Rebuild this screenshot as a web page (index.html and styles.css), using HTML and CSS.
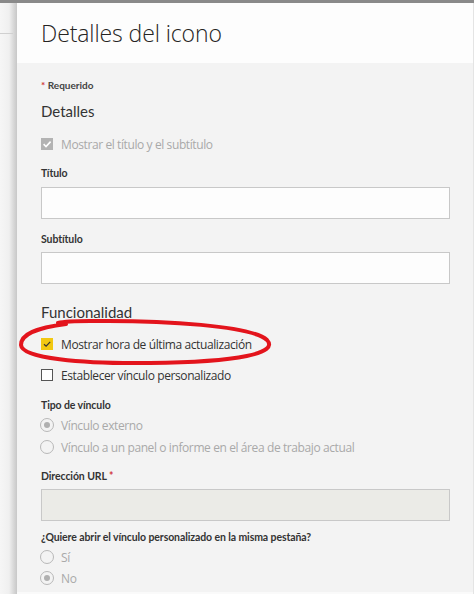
FILE: index.html
```html
<!DOCTYPE html>
<html lang="es">
<head>
<meta charset="utf-8">
<title>Detalles del icono</title>
<link rel="stylesheet" href="styles.css">
</head>
<body>
<div class="topbar"></div>
<div class="layout">
  <div class="backdrop"><div class="backdrop-line"></div></div>
  <main class="panel">
    <header class="panel-header">
      <h1 class="panel-title">Detalles del icono</h1>
    </header>
    <section class="panel-body">
      <div class="required"><span class="star">*</span> Requerido</div>
      <h2 class="section-title">Detalles</h2>
      <div class="check-row disabled m-13">
        <span class="box box-disabled"><svg viewBox="0 0 12 12" class="tick"><path d="M2.6 6.2 L5 8.5 L9.6 3.6" fill="none" stroke="#fff" stroke-width="1.6"/></svg></span>
        <span>Mostrar el título y el subtítulo</span>
      </div>
      <div class="field-label m-11">Título</div>
      <div class="input"></div>
      <div class="field-label m-12">Subtítulo</div>
      <div class="input m-5"></div>
      <h2 class="section-title m-18">Funcionalidad</h2>
      <div class="check-row m-12">
        <span class="box box-yellow"><svg viewBox="0 0 12 12" class="tick"><path d="M3 6.2 L5.1 8.2 L9.2 3.8" fill="none" stroke="#333" stroke-width="1.2"/></svg></span>
        <span>Mostrar hora de última actualización</span>
      </div>
      <div class="check-row m-11">
        <span class="box box-empty"></span>
        <span>Establecer vínculo personalizado</span>
      </div>
      <div class="field-label m-12">Tipo de vínculo</div>
      <div class="radio-row disabled m-2"><span class="radio checked"></span><span>Vínculo externo</span></div>
      <div class="radio-row disabled m-2"><span class="radio"></span><span>Vínculo a un panel o informe en el área de trabajo actual</span></div>
      <div class="field-label m-11">Dirección URL <span class="star">*</span></div>
      <div class="input input-disabled m-5"></div>
      <div class="field-label m-8">¿Quiere abrir el vínculo personalizado en la misma pestaña?</div>
      <div class="radio-row disabled m-2"><span class="radio"></span><span>Sí</span></div>
      <div class="radio-row disabled m-1"><span class="radio checked"></span><span>No</span></div>
    </section>
  </main>
</div>
<svg class="annotation" width="474" height="594" viewBox="0 0 474 594">
  <path d="M58 323 C66 321 76 321 90 321 C165 320 252 326 267 340 C279 353 240 362 150 363 C80 364 22 358 21 345 C21 334 36 328 66 324" fill="none" stroke="#e3141c" stroke-width="4" stroke-linecap="round"/>
</svg>
</body>
</html>
```

FILE: styles.css
```css
* { box-sizing: border-box; }
html, body { margin: 0; padding: 0; }
body {
  width: 474px;
  height: 594px;
  overflow: hidden;
  position: relative;
  font-family: Lato, "Open Sans", sans-serif;
  color: #333;
  background: #f3f3f3;
}
.topbar {
  height: 3px;
  background: #8a8a8a;
}
.layout {
  display: flex;
  height: 591px;
}
.backdrop {
  width: 17px;
  flex: none;
  background: linear-gradient(to right, #f6f6f6 0, #f0f0f0 9px, #d6d6d6 14px, #c8c8c8 17px);
  padding-top: 30px;
}
.backdrop-line {
  height: 1px;
  width: 13px;
  background: #d0d0d0;
}
.panel {
  flex: 1;
  display: flex;
  flex-direction: column;
  background: #f3f3f3;
  border-right: 1px solid #e4e4e4;
}
.panel-header {
  height: 60px;
  background: #fdfdfd;
  padding-left: 24px;
  display: flex;
  align-items: center;
}
.panel-title {
  margin: 0;
  font-family: "Open Sans", sans-serif;
  font-size: 23px;
  font-weight: 300;
  color: #252423;
  letter-spacing: -0.1px;
}
.panel-body {
  flex: 1;
  padding: 14px 23px 0 24px;
  border-bottom: 2px solid #fafafa;
}
.required {
  font-size: 10px;
  line-height: 16px;
  font-weight: 700;
  color: #444;
}
.star { color: #d13438; }
.section-title {
  margin: 8px 0 0;
  font-size: 15px;
  line-height: 20px;
  font-weight: 400;
  color: #333;
}
.check-row, .radio-row {
  display: flex;
  align-items: center;
  height: 20px;
  font-family: "Open Sans", sans-serif;
  font-size: 12px;
  letter-spacing: -0.4px;
  color: #333;
  gap: 8px;
}
.disabled { color: #a9a9a9; }
.box {
  width: 12px;
  height: 12px;
  flex: none;
  display: flex;
}
.tick { width: 12px; height: 12px; }
.box-disabled { background: #b3b3b3; }
.box-yellow { background: #f2c811; }
.box-empty { background: #fff; border: 1px solid #555; }
.radio {
  width: 14px;
  height: 14px;
  flex: none;
  border-radius: 50%;
  border: 1px solid #b8b8b8;
  margin-left: -1px;
  margin-right: -1px;
  display: flex;
  align-items: center;
  justify-content: center;
}
.radio.checked::after {
  content: "";
  width: 6px;
  height: 6px;
  border-radius: 50%;
  background: #b0b0b0;
}
.field-label {
  font-size: 10.5px;
  letter-spacing: -0.1px;
  line-height: 16px;
  font-weight: 700;
  color: #333;
}
.input {
  height: 32px;
  margin-top: 6px;
  background: #fdfdfd;
  border: 1px solid #c8c8c8;
}
.input-disabled { background: #ebebe7; }
.m-1 { margin-top: 1px; }
.m-2 { margin-top: 2px; }
.m-5 { margin-top: 5px; }
.m-8 { margin-top: 8px; }
.m-11 { margin-top: 11px; }
.m-12 { margin-top: 12px; }
.m-13 { margin-top: 13px; }
.m-18 { margin-top: 18px; }
.annotation {
  position: absolute;
  left: 0;
  top: 0;
  pointer-events: none;
}
```
